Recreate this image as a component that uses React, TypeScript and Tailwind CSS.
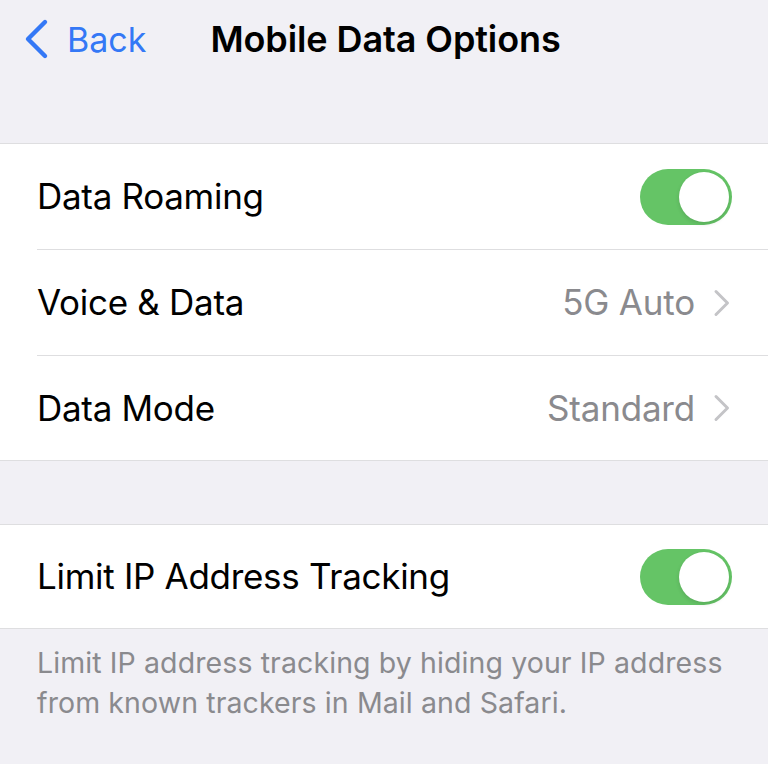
type Row = {
  label: string
  value?: string
  toggle?: boolean
}

const cellularRows: Row[] = [
  { label: "Data Roaming", toggle: true },
  { label: "Voice & Data", value: "5G Auto" },
  { label: "Data Mode", value: "Standard" },
]

function Toggle() {
  return (
    <div className="flex h-[56px] w-[92px] items-center justify-end rounded-full bg-[#65c466] p-[3px]">
      <div className="h-[50px] w-[50px] rounded-full bg-white shadow-[0_2px_4px_rgba(0,0,0,0.12)]" />
    </div>
  )
}

function Disclosure() {
  return (
    <svg width="18" height="28" viewBox="0 0 18 28" className="mr-[1px]">
      <path
        d="M3 2.5 L14.5 14 L3 25.5"
        fill="none"
        stroke="#c4c4c7"
        strokeWidth="3"
        strokeLinecap="round"
        strokeLinejoin="round"
      />
    </svg>
  )
}

function SettingsRow({ row, last, height }: { row: Row; last: boolean; height: string }) {
  return (
    <div className={`flex items-stretch pl-[37px] ${height}`}>
      <div
        className={`flex flex-1 items-center justify-between pr-[36px] ${
          last ? "" : "border-b border-[#dedee0]"
        }`}
      >
        <span className="text-[35px] tracking-[-0.3px] text-black">{row.label}</span>
        {row.toggle ? (
          <Toggle />
        ) : (
          <div className="flex items-center gap-[18px]">
            <span className="text-[35px] tracking-[-0.2px] text-[#8a8a8e]">{row.value}</span>
            <Disclosure />
          </div>
        )}
      </div>
    </div>
  )
}

export default function App() {
  return (
    <div className="min-h-[764px] w-full bg-[#f1f0f5] font-['Inter',sans-serif]">
      {/* Navigation bar */}
      <div className="flex h-[78px] items-center pl-[22px]">
        <div className="flex items-center text-[#3478f6]">
          <svg width="28" height="42" viewBox="0 0 28 42" className="mr-[17px]">
            <path
              d="M23 4 L6 21 L23 38"
              fill="none"
              stroke="currentColor"
              strokeWidth="4.4"
              strokeLinecap="round"
              strokeLinejoin="round"
            />
          </svg>
          <span className="text-[34px]">Back</span>
        </div>
        <span className="ml-[64px] text-[36px] font-semibold tracking-[-0.1px] text-black">
          Mobile Data Options
        </span>
      </div>

      <div className="h-[65px]" />

      {/* Cellular group */}
      <div className="border-y border-[#dedee0] bg-white">
        {cellularRows.map((row, i) => (
          <SettingsRow
            key={row.label}
            row={row}
            last={i === cellularRows.length - 1}
            height={i === cellularRows.length - 1 ? "h-[104px]" : "h-[106px]"}
          />
        ))}
      </div>

      <div className="h-[63px]" />

      {/* Privacy group */}
      <div className="border-y border-[#dedee0] bg-white">
        <SettingsRow row={{ label: "Limit IP Address Tracking", toggle: true }} last height="h-[103px]" />
      </div>

      <p className="px-[37px] pt-[14px] text-[28.5px] leading-[40px] tracking-[0.1px] text-[#8a8a8e]">
        Limit IP address tracking by hiding your IP address from known trackers in Mail and Safari.
      </p>
    </div>
  )
}
